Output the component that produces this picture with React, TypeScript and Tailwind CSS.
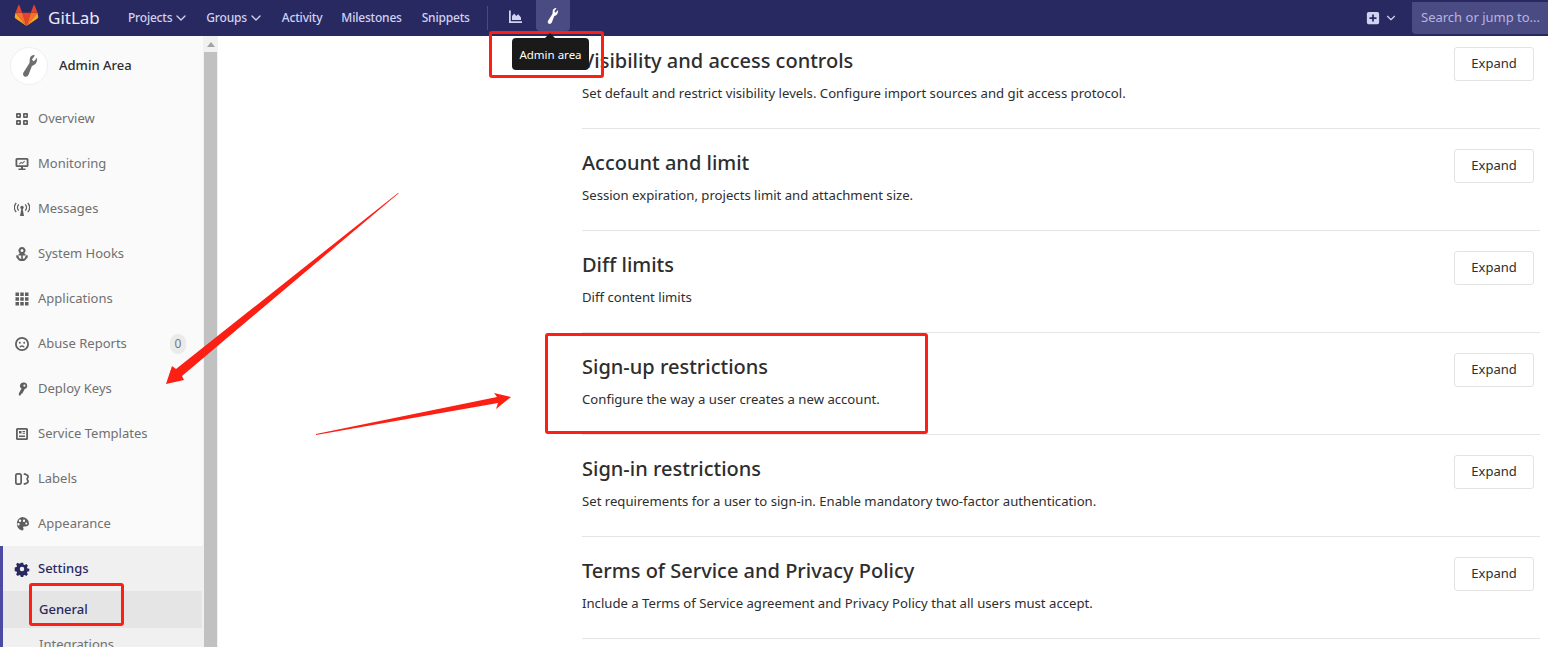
import { ChevronDown } from "lucide-react";
import type { ReactNode } from "react";

const Icon = ({ children, size = 16 }: { children: ReactNode; size?: number }) => (
  <svg width={size} height={size} viewBox="0 0 16 16" fill="currentColor" className="shrink-0">
    {children}
  </svg>
);

const Wrench = ({ width, height }: { width: number; height: number }) => (
  <svg width={width} height={height} viewBox="0 0 11 16" fill="currentColor" className="shrink-0">
    <path d="M8.500 0C6.500.3 5.400 2 5.700 4L5.400 6 1.200 12.500C.3 13.900.8 15.300 2 15.800 3.200 16.200 4.300 15.600 4.800 14.500L7.300 8C9.500 7.500 11 5.700 11 3.500V2L8.600 4.700 7.300 3.300 9.500.3z" />
  </svg>
);

const sideItems: { label: string; icon: ReactNode; badge?: string }[] = [
  {
    label: "Overview",
    icon: (
      <>
        <path fillRule="evenodd" d="M3 2h3a1 1 0 0 1 1 1v3a1 1 0 0 1-1 1H3a1 1 0 0 1-1-1V3a1 1 0 0 1 1-1zm.7 1.700v1.600h1.600V3.700H3.700z" />
        <path fillRule="evenodd" d="M10 2h3a1 1 0 0 1 1 1v3a1 1 0 0 1-1 1h-3a1 1 0 0 1-1-1V3a1 1 0 0 1 1-1zm.7 1.700v1.600h1.600V3.700h-1.600z" />
        <path fillRule="evenodd" d="M3 9h3a1 1 0 0 1 1 1v3a1 1 0 0 1-1 1H3a1 1 0 0 1-1-1v-3a1 1 0 0 1 1-1zm.7 1.700v1.600h1.600v-1.600H3.700z" />
        <path fillRule="evenodd" d="M10 9h3a1 1 0 0 1 1 1v3a1 1 0 0 1-1 1h-3a1 1 0 0 1-1-1v-3a1 1 0 0 1 1-1zm.7 1.700v1.600h1.600v-1.600h-1.600z" />
      </>
    ),
  },
  {
    label: "Monitoring",
    icon: (
      <path fillRule="evenodd" d="M3 2h10a1.500 1.500 0 0 1 1.500 1.500v6A1.500 1.500 0 0 1 13 11H9v1.500h2.500V14h-7v-1.500H7V11H3a1.500 1.500 0 0 1-1.500-1.500v-6A1.500 1.500 0 0 1 3 2zm.3 1.800v5.400h9.400V3.800H3.300zM5 7.800l2-2 1.300 1 2-2 .7.700-2.600 2.600-1.300-1-1.400 1.400L5 7.800z" />
    ),
  },
  {
    label: "Messages",
    icon: (
      <>
        <circle cx="8" cy="6.500" r="1.700" />
        <path d="M7.300 8h1.400l1.300 7H6z" />
        <path d="M4.300 3l1 .7a3.800 3.800 0 0 0 0 5.600l-1 .7a5 5 0 0 1 0-7zM11.700 3l-1 .7a3.800 3.800 0 0 1 0 5.600l1 .7a5 5 0 0 0 0-7z" />
        <path d="M1.700 1.500l1 .7a6.800 6.800 0 0 0 0 8.600l-1 .7a8 8 0 0 1 0-10zM14.300 1.500l-1 .7a6.800 6.800 0 0 1 0 8.600l1 .7a8 8 0 0 0 0-10z" />
      </>
    ),
  },
  {
    label: "System Hooks",
    icon: (
      <path fillRule="evenodd" d="M8 1a3.500 3.500 0 0 1 2.500 6V8h1v1.500H8.800v3.400a3.500 3.500 0 0 0 2.900-2.400l-.8-.2 2.400-1.600.7 3-.8-.3A5.500 5.500 0 0 1 8 15a5.500 5.500 0 0 1-5.200-3.600l-.8.300.7-3 2.400 1.600-.8.200a3.500 3.500 0 0 0 2.900 2.400V9.500H4.500V8h1V7A3.500 3.500 0 0 1 8 1zm0 2a1.500 1.500 0 1 0 0 3 1.500 1.500 0 0 0 0-3z" />
    ),
  },
  {
    label: "Applications",
    icon: (
      <path d="M1.500 1.500h3.500V5H1.500zM6.250 1.500h3.500V5h-3.500zM11 1.500h3.500V5H11zM1.500 6.250h3.500v3.500H1.500zM6.250 6.250h3.500v3.500h-3.500zM11 6.250h3.500v3.500H11zM1.500 11h3.500v3.500H1.500zM6.250 11h3.500v3.500h-3.500zM11 11h3.500v3.500H11z" />
    ),
  },
  {
    label: "Abuse Reports",
    badge: "0",
    icon: (
      <>
        <path fillRule="evenodd" d="M8 1a7 7 0 1 1 0 14A7 7 0 0 1 8 1zm0 1.800a5.200 5.200 0 1 0 0 10.400A5.200 5.200 0 0 0 8 2.800z" />
        <circle cx="5.800" cy="6.800" r="1" />
        <circle cx="10.200" cy="6.800" r="1" />
        <path d="M5.300 11a3 3 0 0 1 5.400 0l-1.100.5a2 2 0 0 0-3.200 0z" />
      </>
    ),
  },
  {
    label: "Deploy Keys",
    icon: (
      <path fillRule="evenodd" d="M10 1.500a3.300 3.300 0 0 1 .7 6.500L8.300 12.500 7 13l-.5 1.500H5l-.3-1.800 2.800-5.200A3.300 3.300 0 0 1 10 1.500zm.4 2a1.100 1.100 0 1 0 0 2.200 1.100 1.100 0 0 0 0-2.200z" />
    ),
  },
  {
    label: "Service Templates",
    icon: (
      <path fillRule="evenodd" d="M3.500 2h9A1.500 1.500 0 0 1 14 3.500v9a1.500 1.500 0 0 1-1.500 1.500h-9A1.500 1.500 0 0 1 2 12.500v-9A1.500 1.500 0 0 1 3.500 2zm.3 1.800v8.400h8.400V3.800H3.800zM5 5h2.500v2.500H5V5zm3.500 0H11v1.300H8.500V5zm0 2.200H11v.8H8.500v-.8zM5 9.500h6V11H5V9.500z" />
    ),
  },
  {
    label: "Labels",
    icon: (
      <path fillRule="evenodd" d="M3.500 2h2C6.900 2 8 3.100 8 4.500v7C8 12.900 6.900 14 5.500 14h-2A2.500 2.500 0 0 1 1 11.500v-7A2.500 2.500 0 0 1 3.500 2zm0 1.700a.8.800 0 0 0-.8.800v7c0 .4.400.8.800.8h2c.4 0 .8-.4.800-.8v-7a.8.800 0 0 0-.8-.8h-2zM10 2.100c2.500.6 5 1.700 5 3.400 0 1.500-1 1.900-1 2.500s1 1 1 2.500c0 1.700-2.500 2.900-5 3.500l-.5-1.700c1.600-.3 3.800-1.100 3.800-1.800s-1-1.200-1-2.500 1-1.800 1-2.500-2.200-1.400-3.800-1.800z" />
    ),
  },
  {
    label: "Appearance",
    icon: (
      <path fillRule="evenodd" d="M8 1a7 7 0 0 1 7 6.500c0 2.200-1.800 2.900-3.500 2.900H10c-.9 0-1.200.9-.7 1.500.6.800.3 2.600-1.300 2.600A7 7 0 0 1 8 1zM4.500 7a1.200 1.200 0 1 0 0 2.400 1.200 1.200 0 0 0 0-2.400zM6 3.500a1.200 1.200 0 1 0 0 2.400 1.200 1.200 0 0 0 0-2.400zm4 0a1.200 1.200 0 1 0 0 2.400 1.200 1.200 0 0 0 0-2.400zm2.300 3a1 1 0 1 0 0 2 1 1 0 0 0 0-2z" />
    ),
  },
];

const sections = [
  ["Visibility and access controls", "Set default and restrict visibility levels. Configure import sources and git access protocol."],
  ["Account and limit", "Session expiration, projects limit and attachment size."],
  ["Diff limits", "Diff content limits"],
  ["Sign-up restrictions", "Configure the way a user creates a new account."],
  ["Sign-in restrictions", "Set requirements for a user to sign-in. Enable mandatory two-factor authentication."],
  ["Terms of Service and Privacy Policy", "Include a Terms of Service agreement and Privacy Policy that all users must accept."],
];

function TopNav() {
  return (
    <header className="h-9 shrink-0 bg-[#292961] flex items-center text-[12px] tracking-[-0.2px] font-medium text-[#d1d1f0]">
      <svg width="25" height="23" viewBox="0 0 26 25" className="ml-[14px] mb-[5px] shrink-0">
        <path d="M13 24L8.300 9.500h9.400z" fill="#e24329" />
        <path d="M13 24L1 9.500h7.300z" fill="#fc6d26" />
        <path d="M1 9.500L.2 14.200c-.1.500.1.900.5 1.200L13 24z" fill="#fca326" />
        <path d="M1 9.500h7.300L5.200 1c-.2-.4-.7-.4-.9 0z" fill="#e24329" />
        <path d="M13 24l4.700-14.500H25z" fill="#fc6d26" />
        <path d="M25 9.500l.8 4.700c.1.500-.1.900-.5 1.200L13 24z" fill="#fca326" />
        <path d="M25 9.500h-7.300L20.800 1c.2-.4.700-.4.900 0z" fill="#e24329" />
      </svg>
      <span className="ml-[9px] w-[52px] text-[17px] tracking-normal font-normal text-[#e9e9f7]">GitLab</span>
      <span className="ml-[28px] flex items-center gap-px">
        Projects <ChevronDown size={16} strokeWidth={2} />
      </span>
      <span className="ml-[17px] flex items-center gap-px">
        Groups <ChevronDown size={16} strokeWidth={2} />
      </span>
      <span className="ml-[18px]">Activity</span>
      <span className="ml-[19px]">Milestones</span>
      <span className="ml-[20px]">Snippets</span>
      <div className="ml-[17px] w-px h-6 bg-[#4a4a82]" />
      <span className="ml-[19px] w-4 -mt-[2px] text-[#d1d1f0]">
        <Icon>
          <path d="M2 1.500h1.800V12.200H15V14H2z" />
          <path d="M5 11V7l2.200-2.500L9.200 7l2-1.800L14 8.500V11z" />
        </Icon>
      </span>
      <div className="ml-[13px] w-[34px] h-[31px] self-start rounded-b-[4px] bg-[#4b4b83] flex items-center justify-center text-white">
        <Wrench width={11} height={16} />
      </div>
      <div className="ml-auto flex items-center">
        <span className="text-[#d1d1f0]">
          <Icon size={14}>
            <path fillRule="evenodd" d="M3 1h10a2 2 0 0 1 2 2v10a2 2 0 0 1-2 2H3a2 2 0 0 1-2-2V3a2 2 0 0 1 2-2zm4 3v3H4v2h3v3h2V9h3V7H9V4H7z" />
          </Icon>
        </span>
        <ChevronDown size={14} strokeWidth={2} className="ml-[4px]" />
        <div className="ml-[14px] w-[136px] h-8 self-start rounded-bl-[4px] bg-[#4b4b83] pl-[9px] flex items-center text-[13px] tracking-normal font-normal text-[#b5b5e0] whitespace-nowrap overflow-hidden">
          Search or jump to...
        </div>
      </div>
    </header>
  );
}

function SideRow({ label, icon, badge }: { label: string; icon: ReactNode; badge?: string }) {
  return (
    <div className="h-[45px] shrink-0 flex items-center pl-[14px] pr-[17px]">
      <span className="text-[#5f5f5f]">
        <Icon>{icon}</Icon>
      </span>
      <span className="ml-[8px] text-[13px] text-[#707070]">{label}</span>
      {badge && (
        <span className="ml-auto w-4 h-5 rounded-full bg-[#ebebeb] text-center text-[12px] leading-5 text-[#777]">
          {badge}
        </span>
      )}
    </div>
  );
}

function Sidebar() {
  return (
    <aside className="w-[218px] shrink-0 flex overflow-hidden">
      <div className="w-[203px] bg-[#fafafa] flex flex-col">
        <div className="h-[60px] shrink-0 flex items-center pl-[10px]">
          <div className="w-[38px] h-[38px] rounded-full bg-white border border-[#f0f0f0] flex items-center justify-center text-[#6e6e6e]">
            <Wrench width={15} height={22} />
          </div>
          <span className="ml-[11px] text-[13px] font-medium text-[#2e2e2e]">Admin Area</span>
        </div>
        {sideItems.map((item) => (
          <SideRow key={item.label} {...item} />
        ))}
        <div className="flex-1 bg-[#f0f0f0] border-l-[3px] border-[#4b4ba3]">
          <div className="h-[45px] flex items-center pl-[11px] text-[#292961]">
            <Icon>
              <path fillRule="evenodd" d="M6.700 1h2.600l.4 2 1.300.6 1.800-1.100 1.800 1.800-1.100 1.800.6 1.300 2 .4v2.600l-2 .4-.6 1.300 1.100 1.800-1.800 1.800-1.800-1.100-1.300.6-.4 2H6.700l-.4-2-1.300-.6-1.800 1.100-1.800-1.800 1.100-1.800-.6-1.300-2-.4V6.300l2-.4.6-1.300-1.100-1.800 1.800-1.800L5 2.100l1.300-.6zM8 5.500a2.500 2.500 0 1 0 0 5 2.500 2.500 0 0 0 0-5z" transform="translate(0.800 0.800) scale(0.900)" />
            </Icon>
            <span className="ml-[8px] text-[13px] font-medium">Settings</span>
          </div>
          <div className="h-[37px] mr-[1px] flex items-center pl-[36px] bg-[#e5e5e5] text-[13px] font-medium text-[#292961]">
            General
          </div>
          <div className="pl-[36px] mt-[7px] text-[13px] text-[#707070]">Integrations</div>
        </div>
      </div>
      <div className="w-[15px] flex flex-col bg-[#f1f1f1]">
        <div className="h-4 flex items-center justify-center">
          <div className="w-0 h-0 border-x-[4px] border-x-transparent border-b-[5px] border-b-[#a3a3a3]" />
        </div>
        <div className="flex-1 ml-px mr-px bg-[#c1c1c1]" />
      </div>
    </aside>
  );
}

function Section({ title, text }: { title: string; text: string }) {
  return (
    <section className="h-[102px] shrink-0 border-b border-[#e5e5e5] flex items-start justify-between">
      <div className="pt-[20px]">
        <h4 className="h-[28px] text-[20px] leading-[28px] font-medium text-[#2e2e2e]">{title}</h4>
        <p className="mt-[9px] text-[13.150px] leading-[18px] text-[#2e2e2e]">{text}</p>
      </div>
      <button className="mt-[20px] mr-[6px] w-20 h-[34px] rounded-[3px] border border-[#e3e3e3] bg-white text-[13px] text-[#2e2e2e]">
        Expand
      </button>
    </section>
  );
}

function Annotations() {
  return (
    <>
      <div className="absolute left-[489px] top-[31px] w-[115px] h-[47px] rounded-[3px] border-[3px] border-[#fb1f14]" />
      <div className="absolute left-[545px] top-[333px] w-[383px] h-[101px] rounded-[3px] border-[3px] border-[#fb1f14]" />
      <div className="absolute left-[29px] top-[583px] w-[95px] h-[43px] rounded-[3px] border-[3px] border-[#fb1f14]" />
      <div className="absolute left-[512px] top-[38px] w-[77px] h-8 pt-px rounded-[4px] bg-[#1a1a1a] flex items-center justify-center text-[11.500px] text-white">
        Admin area
      </div>
      <div className="absolute left-[544px] top-[33px] w-0 h-0 border-x-[6px] border-x-transparent border-b-[6px] border-b-[#1a1a1a]" />
      <svg width="1548" height="647" className="absolute inset-0 pointer-events-none">
        <path d="M399 193L182 376 184 380 166 384 172 366 176 369 398 193z" fill="#fb1f14" />
        <path d="M316 435L498 403 496 409 511 397 494 393 497 397 316 434z" fill="#fb1f14" />
      </svg>
    </>
  );
}

export default function App() {
  return (
    <div className="relative w-[1548px] h-[647px] overflow-hidden bg-white flex flex-col font-['Noto_Sans',sans-serif]">
      <TopNav />
      <div className="flex-1 flex min-h-0">
        <Sidebar />
        <main className="flex-1 pl-[364px] pr-2 -mt-[9px]">
          {sections.map(([title, text]) => (
            <Section key={title} title={title} text={text} />
          ))}
        </main>
      </div>
      <Annotations />
    </div>
  );
}
